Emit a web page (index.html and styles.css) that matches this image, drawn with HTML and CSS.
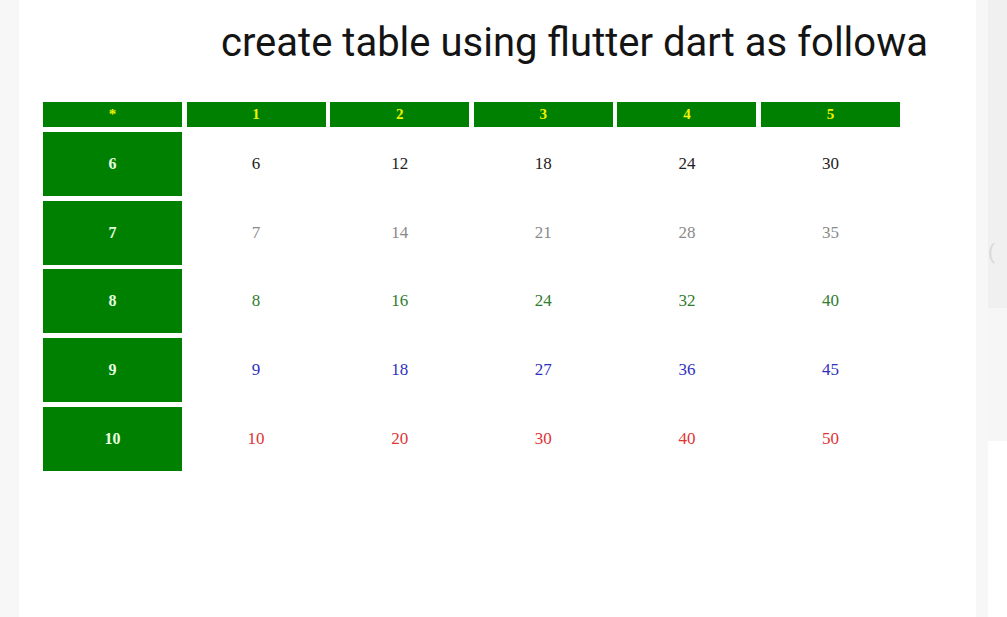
FILE: index.html
```html
<!DOCTYPE html>
<html>
<head>
<meta charset="utf-8">
<link rel="stylesheet" href="styles.css">
</head>
<body>
<div class="page">
  <div class="gutter-left"></div>
  <main class="card">
    <h1 class="title">create table using flutter dart as followa</h1>
    <div class="table">
      <div class="th">*</div><div class="th">1</div><div class="th">2</div><div class="th">3</div><div class="th">4</div><div class="th">5</div>

      <div class="rh">6</div><div class="td c-black">6</div><div class="td c-black">12</div><div class="td c-black">18</div><div class="td c-black">24</div><div class="td c-black">30</div>
      <div class="rh">7</div><div class="td c-gray">7</div><div class="td c-gray">14</div><div class="td c-gray">21</div><div class="td c-gray">28</div><div class="td c-gray">35</div>
      <div class="rh">8</div><div class="td c-green">8</div><div class="td c-green">16</div><div class="td c-green">24</div><div class="td c-green">32</div><div class="td c-green">40</div>
      <div class="rh">9</div><div class="td c-blue">9</div><div class="td c-blue">18</div><div class="td c-blue">27</div><div class="td c-blue">36</div><div class="td c-blue">45</div>
      <div class="rh">10</div><div class="td c-red">10</div><div class="td c-red">20</div><div class="td c-red">30</div><div class="td c-red">40</div><div class="td c-red">50</div>
    </div>
  </main>
  <aside class="gutter-right">
    <div class="strip"></div>
    <div class="side">
      <div class="side-top"><span class="paren">(</span></div>
      <div class="side-mid"></div>
      <div class="side-bottom"></div>
    </div>
  </aside>
</div>
</body>
</html>
```

FILE: styles.css
```css
* { box-sizing: border-box; }
html, body { margin: 0; padding: 0; }
body { width: 1007px; height: 617px; overflow: hidden; background: #f7f7f7; }

.page { display: flex; width: 1007px; height: 617px; }
.gutter-left { width: 19px; background: #f7f7f7; flex: none; }
.card { width: 957px; flex: none; background: #ffffff; padding: 0 0 0 24px; }

.title {
  margin: 0;
  padding: 21px 0 0 178px;
  height: 102px;
  font-family: Roboto, "Noto Sans", sans-serif;
  font-weight: 400;
  font-size: 40px;
  line-height: 44px;
  color: #141414;
  white-space: nowrap;
}

.table {
  display: grid;
  grid-template-columns: repeat(6, 139px);
  grid-template-rows: 25px repeat(5, 64px);
  column-gap: 4.6px;
  row-gap: 4.8px;
  font-family: "Liberation Serif", "Times New Roman", serif;
}

.th {
  background: #008000;
  color: #f2f200;
  font-weight: bold;
  font-size: 15px;
  display: flex; align-items: center; justify-content: center;
}

.rh {
  background: #008000;
  color: #e6ffe0;
  font-weight: bold;
  font-size: 16px;
  display: flex; align-items: center; justify-content: center;
}
.td {
  font-size: 17px;
  display: flex; align-items: center; justify-content: center;
}
.c-black { color: #222222; }
.c-gray { color: #8a8a8a; }
.c-green { color: #2f7d2f; }
.c-blue { color: #3030c0; }
.c-red { color: #e03434; }

.gutter-right { flex: 1; display: flex; }
.strip { width: 12px; background: #f7f7f7; }
.side { flex: 1; display: flex; flex-direction: column; }
.side-top { height: 308px; background: #f0f0f0; position: relative; }
.paren {
  position: absolute; left: 0; top: 240px;
  font-family: Roboto, sans-serif; font-size: 20px; color: #d8d8d8;
}
.side-mid { height: 133px; background: #f6f6f6; }
.side-bottom { flex: 1; background: #ffffff; }
```
